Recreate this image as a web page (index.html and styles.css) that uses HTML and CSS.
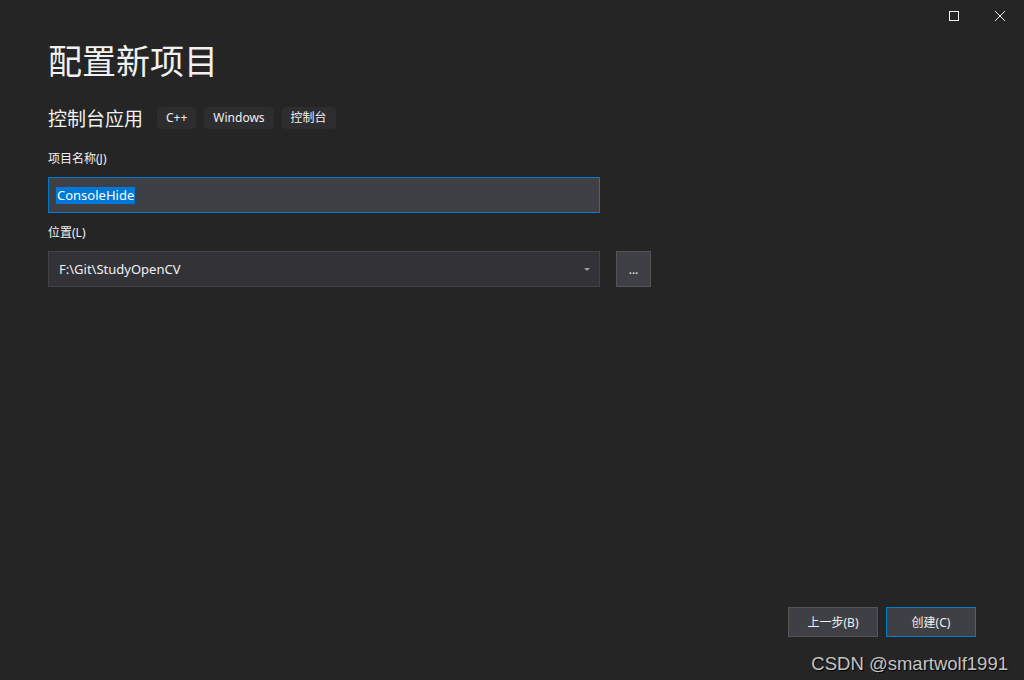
FILE: index.html
```html
<!DOCTYPE html>
<html lang="zh-CN">
  <head>
    <meta charset="UTF-8" />
    <meta name="viewport" content="width=device-width, initial-scale=1.0" />
    <title>配置新项目</title>
    <link rel="stylesheet" href="styles.css">
  </head>
  <body>
    <div class="window">
      <div class="titlebar">
        <button class="win-btn" title="最大化">
          <svg viewBox="0 0 10 10" width="10" height="10">
            <rect x="0.5" y="0.5" width="9" height="9" fill="none" stroke="currentColor" stroke-width="1" />
          </svg>
        </button>
        <button class="win-btn" title="关闭">
          <svg viewBox="0 0 10 10" width="10" height="10">
            <path d="M0 0L10 10M10 0L0 10" fill="none" stroke="currentColor" stroke-width="1" />
          </svg>
        </button>
      </div>

      <div class="content">
        <h1>配置新项目</h1>

        <div class="template">
          <h2>控制台应用</h2>
          <span class="tag">C++</span>
          <span class="tag">Windows</span>
          <span class="tag">控制台</span>
        </div>

        <div class="field">
          <label class="field-label">项目名称(J)</label>
          <div class="input focused"><span class="selected">ConsoleHide</span></div>
        </div>

        <div class="field">
          <label class="field-label">位置(L)</label>
          <div class="location-row">
            <div class="input select">
              <span>F:\Git\StudyOpenCV</span>
              <svg class="caret" viewBox="0 0 6 3" width="6" height="3">
                <path d="M0 0H6L3 3Z" fill="#a0a0a0" />
              </svg>
            </div>
            <button class="browse">...</button>
          </div>
        </div>
      </div>

      <div class="footer">
        <button class="btn">上一步(B)</button>
        <button class="btn primary">创建(C)</button>
      </div>

      <div class="watermark">CSDN @smartwolf1991</div>
    </div>
  </body>
</html>
```

FILE: styles.css
```css
:root {
  --bg: #252526;
  --text: #f1f1f1;
  --input-bg: #333337;
  --input-border: #434346;
  --button-bg: #3f3f46;
  --button-border: #555555;
  --accent: #007acc;
  --selection: #0078d7;
  --tag-bg: #2d2d30;
}

* {
  box-sizing: border-box;
  margin: 0;
  padding: 0;
}

body {
  background-color: var(--bg);
  color: var(--text);
  font-family: "Noto Sans", "Noto Sans CJK SC", sans-serif;
}

.window {
  position: relative;
  display: flex;
  flex-direction: column;
  height: 680px;
  overflow: hidden;
}

.titlebar {
  display: flex;
  justify-content: flex-end;
  height: 32px;
  padding-right: 1px;
}

.win-btn {
  width: 46px;
  height: 32px;
  border: none;
  background: transparent;
  color: #f1f1f1;
  display: flex;
  align-items: center;
  justify-content: center;
}

.content {
  padding: 0 48px;
}

h1 {
  font-family: "Noto Sans CJK SC", sans-serif;
  font-size: 34px;
  font-weight: 400;
  line-height: 46px;
  margin-top: 5px;
}

.template {
  display: flex;
  align-items: center;
  gap: 8px;
  margin-top: 24px;
}

.template h2 {
  font-family: "Noto Sans CJK SC", sans-serif;
  font-size: 19px;
  font-weight: 400;
  line-height: 22px;
  margin-right: 6px;
}

.tag {
  background: var(--tag-bg);
  border-radius: 4px;
  height: 22px;
  padding: 0 9px;
  font-size: 12px;
  line-height: 22px;
}

.field {
  margin-top: 21px;
}

.field + .field {
  margin-top: 11px;
}

.field-label {
  display: block;
  font-size: 12px;
  line-height: 18px;
  margin-bottom: 9px;
}

.input {
  width: 552px;
  height: 36px;
  background: var(--input-bg);
  border: 1px solid var(--input-border);
  display: flex;
  align-items: center;
  padding: 0 10px;
  font-size: 13px;
}

.input.focused {
  background: #3f3f46;
  border-color: var(--accent);
  padding: 0 7px;
}

.selected {
  background: var(--selection);
  color: #ffffff;
  line-height: 17px;
  padding: 0 1px;
}

.location-row {
  display: flex;
  gap: 16px;
}

.select {
  justify-content: space-between;
}

.caret {
  margin-right: -1px;
}

.browse {
  width: 35px;
  height: 36px;
  background: var(--button-bg);
  border: 1px solid var(--button-border);
  color: var(--text);
  font-size: 12px;
  font-family: inherit;
}

.footer {
  display: flex;
  justify-content: flex-end;
  gap: 8px;
  margin-top: auto;
  padding: 0 48px 43px 0;
}

.btn {
  width: 90px;
  height: 30px;
  background: var(--button-bg);
  border: 1px solid var(--button-border);
  color: var(--text);
  font-family: inherit;
  font-size: 12px;
}

.btn.primary {
  border-color: var(--accent);
}

.watermark {
  position: absolute;
  right: 16px;
  bottom: 5px;
  font-family: "Liberation Sans", Arial, sans-serif;
  font-size: 18.5px;
  color: #c4c4c4;
  text-shadow: 1px 1px 1px #000000;
}
```
